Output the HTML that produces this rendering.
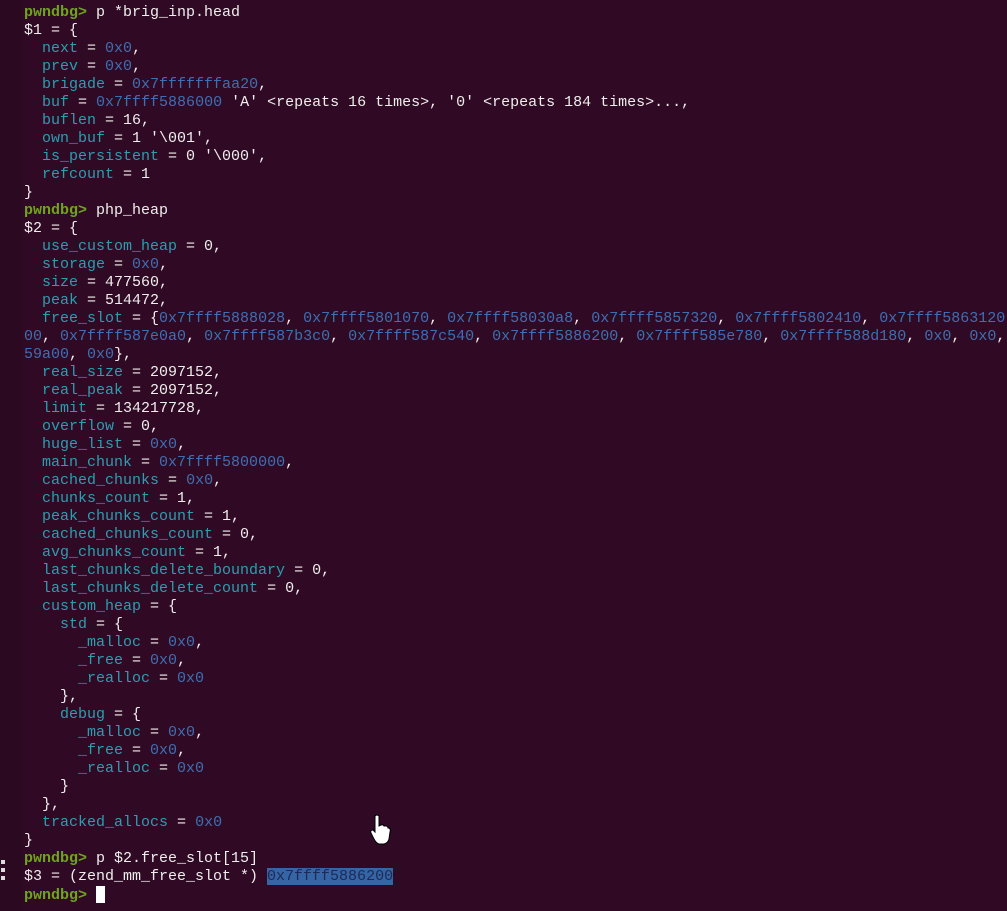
<!DOCTYPE html>
<html><head><meta charset="utf-8"><style>
html,body{margin:0;padding:0;width:1007px;height:911px;overflow:hidden;background:#300a24;}
#strip{position:absolute;left:0;top:0;width:22px;height:911px;background:#2b0a21;}
pre{position:absolute;left:24px;top:4px;margin:0;font-family:"Liberation Mono",monospace;font-size:15px;line-height:18px;color:#eeeeec;white-space:pre;width:1000px;overflow:hidden;}
.g{color:#6ea51c;font-weight:bold}
.t{color:#2a9fb0}
.b{color:#3d6fb2}
.hl{background:#3565a5;color:#1e2a55}
.cur{display:inline-block;width:9px;height:17px;background:#fff;vertical-align:-4px}
.dot{position:absolute;left:1px;width:4px;height:4px;background:#ddd}
</style></head><body>
<div id="strip"></div>
<div class="dot" style="top:860px"></div><div class="dot" style="top:868px"></div><div class="dot" style="top:876px"></div>
<pre><span class="g">pwndbg&gt;</span> p *brig_inp.head
$1 = {
  <span class="t">next</span> = <span class="b">0x0</span>,
  <span class="t">prev</span> = <span class="b">0x0</span>,
  <span class="t">brigade</span> = <span class="b">0x7fffffffaa20</span>,
  <span class="t">buf</span> = <span class="b">0x7ffff5886000</span> 'A' &lt;repeats 16 times&gt;, '0' &lt;repeats 184 times&gt;...,
  <span class="t">buflen</span> = 16,
  <span class="t">own_buf</span> = 1 '\001',
  <span class="t">is_persistent</span> = 0 '\000',
  <span class="t">refcount</span> = 1
}
<span class="g">pwndbg&gt;</span> php_heap
$2 = {
  <span class="t">use_custom_heap</span> = 0,
  <span class="t">storage</span> = <span class="b">0x0</span>,
  <span class="t">size</span> = 477560,
  <span class="t">peak</span> = 514472,
  <span class="t">free_slot</span> = {<span class="b">0x7ffff5888028</span>, <span class="b">0x7ffff5801070</span>, <span class="b">0x7ffff58030a8</span>, <span class="b">0x7ffff5857320</span>, <span class="b">0x7ffff5802410</span>, <span class="b">0x7ffff5863120</span>
<span class="b">00</span>, <span class="b">0x7ffff587e0a0</span>, <span class="b">0x7ffff587b3c0</span>, <span class="b">0x7ffff587c540</span>, <span class="b">0x7ffff5886200</span>, <span class="b">0x7ffff585e780</span>, <span class="b">0x7ffff588d180</span>, <span class="b">0x0</span>, <span class="b">0x0</span>,
<span class="b">59a00</span>, <span class="b">0x0</span>},
  <span class="t">real_size</span> = 2097152,
  <span class="t">real_peak</span> = 2097152,
  <span class="t">limit</span> = 134217728,
  <span class="t">overflow</span> = 0,
  <span class="t">huge_list</span> = <span class="b">0x0</span>,
  <span class="t">main_chunk</span> = <span class="b">0x7ffff5800000</span>,
  <span class="t">cached_chunks</span> = <span class="b">0x0</span>,
  <span class="t">chunks_count</span> = 1,
  <span class="t">peak_chunks_count</span> = 1,
  <span class="t">cached_chunks_count</span> = 0,
  <span class="t">avg_chunks_count</span> = 1,
  <span class="t">last_chunks_delete_boundary</span> = 0,
  <span class="t">last_chunks_delete_count</span> = 0,
  <span class="t">custom_heap</span> = {
    <span class="t">std</span> = {
      <span class="t">_malloc</span> = <span class="b">0x0</span>,
      <span class="t">_free</span> = <span class="b">0x0</span>,
      <span class="t">_realloc</span> = <span class="b">0x0</span>
    },
    <span class="t">debug</span> = {
      <span class="t">_malloc</span> = <span class="b">0x0</span>,
      <span class="t">_free</span> = <span class="b">0x0</span>,
      <span class="t">_realloc</span> = <span class="b">0x0</span>
    }
  },
  <span class="t">tracked_allocs</span> = <span class="b">0x0</span>
}
<span class="g">pwndbg&gt;</span> p $2.free_slot[15]
$3 = (zend_mm_free_slot *) <span class="hl">0x7ffff5886200</span>
<span class="g">pwndbg&gt;</span> <span class="cur"></span></pre>
<svg style="position:absolute;left:368px;top:814px" width="24" height="32" viewBox="0 0 24 32"><path d="M7 2 Q9 0 11 2 L11 12 L13 11 Q15 10 16 12 L18 12 Q20 12 20 14 L21 14 Q23 15 22 18 L21 25 Q20 29 16 30 L11 30 Q8 29 6 25 L3 19 Q2 16 5 16 L7 18 Z" fill="#fff" stroke="#000" stroke-width="1"/></svg>
</body></html>
